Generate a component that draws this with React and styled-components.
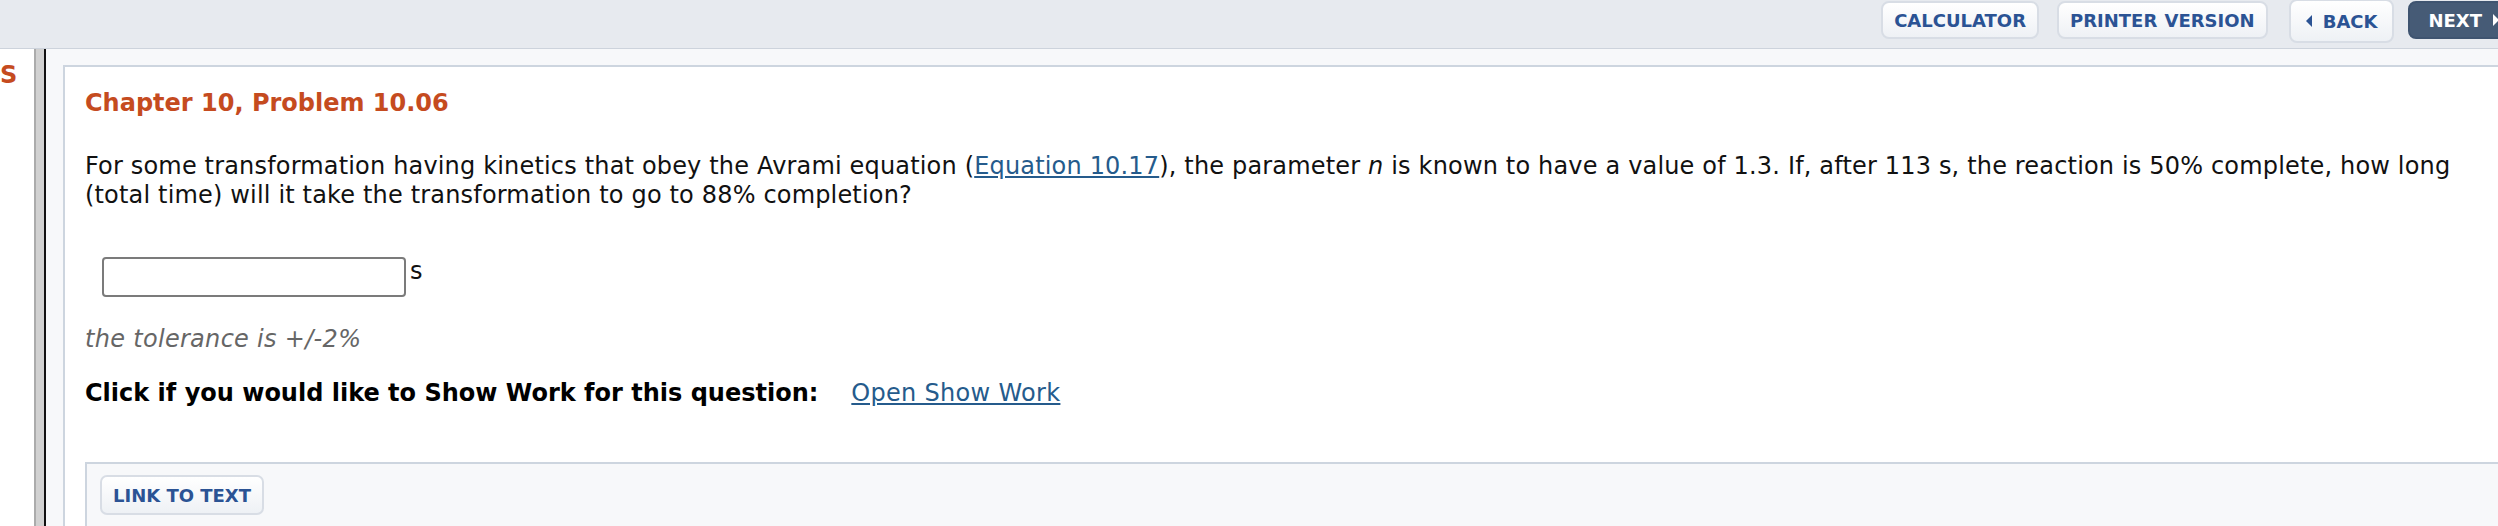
import React from "react";
import styled, { createGlobalStyle } from "styled-components";

const GlobalStyle = createGlobalStyle`
  body {
    margin: 0;
    background: #ffffff;
    font-family: "DejaVu Sans", Verdana, sans-serif;
    overflow: hidden;
  }
`;

const Page = styled.div`
  width: 2498px;
  height: 526px;
  overflow: hidden;
  display: flex;
  flex-direction: column;
`;

const TopBar = styled.div`
  height: 48px;
  flex: none;
  background: #e7eaef;
  border-bottom: 1px solid #cdd3dc;
  display: flex;
  justify-content: flex-end;
  align-items: flex-start;
  overflow: hidden;
`;

const BarButton = styled.button`
  display: flex;
  align-items: center;
  gap: 11px;
  height: ${(p) => (p.tall ? "44px" : "38px")};
  margin-top: ${(p) => (p.tall ? "-1px" : "1px")};
  margin-left: ${(p) => p.gap || "0"};
  margin-right: ${(p) => p.offRight || "0"};
  padding: 0 ${(p) => p.pad || "11px"};
  border: 2px solid ${(p) => (p.dark ? "#3f5470" : "#d8dde5")};
  border-radius: 8px;
  background: ${(p) =>
    p.dark ? "#465b76" : "linear-gradient(#ffffff, #eef1f5)"};
  color: ${(p) => (p.dark ? "#ffffff" : "#2b5394")};
  font-family: "DejaVu Sans", Verdana, sans-serif;
  font-weight: bold;
  font-size: 18px;
  word-spacing: 1px;
  cursor: pointer;
  flex: none;
`;

const Arrow = styled.span`
  display: inline-block;
  width: 0;
  height: 0;
  border-top: 6px solid transparent;
  border-bottom: 6px solid transparent;
  ${(p) =>
    p.dir === "left"
      ? "border-right: 6px solid currentColor;"
      : "border-left: 6px solid currentColor;"}
`;

const Body = styled.div`
  flex: 1;
  display: flex;
  min-height: 0;
`;

const SideNav = styled.div`
  width: 34px;
  flex: none;
  background: #ffffff;
  color: #c54b1f;
  font-weight: bold;
  font-size: 24px;
  padding-top: 12px;
  overflow: hidden;
  white-space: nowrap;
`;

const Splitter = styled.div`
  width: 8px;
  flex: none;
  background: #d1d1d1;
  border-left: 2px solid #ababab;
  border-right: 2px solid #111111;
`;

const Main = styled.div`
  flex: 1;
  background: #f7f8fa;
  padding: 16px 0 0 17px;
  min-width: 0;
`;

const Panel = styled.div`
  background: #ffffff;
  border: 2px solid #cdd5df;
  border-right: none;
  border-bottom: none;
  height: 100%;
  padding: 21px 0 0 20px;
  box-sizing: border-box;
`;

const Title = styled.h2`
  margin: 0;
  font-size: 24px;
  line-height: 30px;
  font-weight: bold;
  color: #c54b1f;
`;

const Question = styled.p`
  margin: 34px 0 0;
  max-width: 2400px;
  font-size: 24px;
  line-height: 29px;
  letter-spacing: 0.17px;
  color: #111111;
`;

const EqLink = styled.a`
  color: #255b8c;
  text-decoration: underline;
`;

const AnswerRow = styled.div`
  display: flex;
  align-items: flex-start;
  gap: 4px;
  margin: 47px 0 0 17px;
`;

const AnswerInput = styled.input`
  width: 304px;
  height: 40px;
  box-sizing: border-box;
  border: 2px solid #7b7b7b;
  border-radius: 4px;
  background: #ffffff;
`;

const Unit = styled.span`
  font-size: 24px;
  line-height: 29px;
  color: #111111;
`;

const Tolerance = styled.div`
  margin-top: 28px;
  font-size: 24px;
  line-height: 29px;
  letter-spacing: 0.3px;
  font-style: italic;
  color: #666666;
`;

const ShowWorkRow = styled.div`
  margin-top: 25px;
  display: flex;
  gap: 33px;
  font-size: 24px;
  line-height: 29px;
`;

const ShowWorkLabel = styled.span`
  font-weight: bold;
  color: #000000;
`;

const ShowWorkLink = styled.a`
  color: #255b8c;
  letter-spacing: 0.3px;
  text-decoration: underline;
`;

const LinkBox = styled.div`
  margin-top: 54px;
  background: #f7f8fa;
  border: 2px solid #cdd5df;
  border-right: none;
  border-bottom: none;
  padding: 11px 0 20px 13px;
`;

const TextButton = styled.button`
  height: 40px;
  padding: 0 11px;
  border: 2px solid #d8dde5;
  border-radius: 7px;
  background: linear-gradient(#ffffff, #eef1f5);
  color: #2b5394;
  font-family: "DejaVu Sans", Verdana, sans-serif;
  font-weight: bold;
  font-size: 18px;
  cursor: pointer;
`;

export default function App() {
  return (
    <Page>
      <GlobalStyle />
      <TopBar>
        <BarButton>CALCULATOR</BarButton>
        <BarButton gap="18px">PRINTER VERSION</BarButton>
        <BarButton tall gap="21px" pad="15px">
          <Arrow dir="left" />
          BACK
        </BarButton>
        <BarButton dark gap="14px" pad="18px" offRight="-21px">
          NEXT
          <Arrow dir="right" />
        </BarButton>
      </TopBar>
      <Body>
        <SideNav>S</SideNav>
        <Splitter />
        <Main>
          <Panel>
            <Title>Chapter 10, Problem 10.06</Title>
            <Question>
              For some transformation having kinetics that obey the Avrami
              equation (<EqLink href="#">Equation 10.17</EqLink>), the parameter{" "}
              <i>n</i> is known to have a value of 1.3. If, after 113 s, the
              reaction is 50% complete, how long (total time) will it take the
              transformation to go to 88% completion?
            </Question>
            <AnswerRow>
              <AnswerInput type="text" />
              <Unit>s</Unit>
            </AnswerRow>
            <Tolerance>the tolerance is +/-2%</Tolerance>
            <ShowWorkRow>
              <ShowWorkLabel>
                Click if you would like to Show Work for this question:
              </ShowWorkLabel>
              <ShowWorkLink href="#">Open Show Work</ShowWorkLink>
            </ShowWorkRow>
            <LinkBox>
              <TextButton>LINK TO TEXT</TextButton>
            </LinkBox>
          </Panel>
        </Main>
      </Body>
    </Page>
  );
}
